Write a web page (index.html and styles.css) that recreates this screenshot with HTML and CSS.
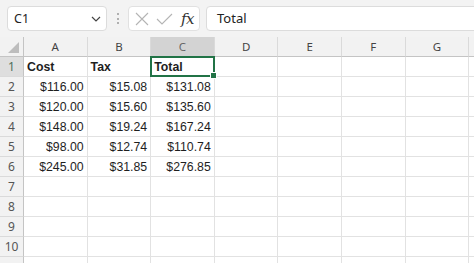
FILE: index.html
```html
<!DOCTYPE html>
<html>
<head>
<meta charset="utf-8">
<link rel="stylesheet" href="styles.css">
</head>
<body>
<div class="app">
  <div class="topbar">
    <div class="namebox">
      <span class="nb-text">C1</span>
      <svg class="chev" width="10" height="6" viewBox="0 0 10 6"><path d="M1 1 L5 5 L9 1" fill="none" stroke="#444" stroke-width="1.2"/></svg>
    </div>
    <div class="dots"><i></i><i></i><i></i></div>
    <div class="fxbox">
      <svg class="ic" width="14" height="14" viewBox="0 0 14 14"><path d="M1 1 L13 13 M13 1 L1 13" stroke="#b4b4b4" stroke-width="1.1" fill="none"/></svg>
      <svg class="ic" width="17" height="12" viewBox="0 0 17 12"><path d="M1 6 L6 11 L16 1" stroke="#b4b4b4" stroke-width="1.1" fill="none"/></svg>
      <span class="fx">fx</span>
    </div>
    <div class="formula">Total</div>
  </div>
  <div class="grid">
    <div class="h corner"><svg width="12" height="11" viewBox="0 0 12 11"><polygon points="11,0 11,11 0,11" fill="#bdbdbd"/></svg></div>
    <div class="h">A</div><div class="h">B</div><div class="h sel">C</div><div class="h">D</div><div class="h">E</div><div class="h">F</div><div class="h">G</div><div class="h"></div>

    <div class="r rsel">1</div><div class="c b">Cost</div><div class="c b">Tax</div><div class="c b active">Total<span class="selbox"><span class="handle"></span></span></div><div class="c"></div><div class="c"></div><div class="c"></div><div class="c"></div><div class="c"></div>

    <div class="r">2</div><div class="c n">$116.00</div><div class="c n">$15.08</div><div class="c n">$131.08</div><div class="c"></div><div class="c"></div><div class="c"></div><div class="c"></div><div class="c"></div>

    <div class="r">3</div><div class="c n">$120.00</div><div class="c n">$15.60</div><div class="c n">$135.60</div><div class="c"></div><div class="c"></div><div class="c"></div><div class="c"></div><div class="c"></div>

    <div class="r">4</div><div class="c n">$148.00</div><div class="c n">$19.24</div><div class="c n">$167.24</div><div class="c"></div><div class="c"></div><div class="c"></div><div class="c"></div><div class="c"></div>

    <div class="r">5</div><div class="c n">$98.00</div><div class="c n">$12.74</div><div class="c n">$110.74</div><div class="c"></div><div class="c"></div><div class="c"></div><div class="c"></div><div class="c"></div>

    <div class="r">6</div><div class="c n">$245.00</div><div class="c n">$31.85</div><div class="c n">$276.85</div><div class="c"></div><div class="c"></div><div class="c"></div><div class="c"></div><div class="c"></div>

    <div class="r">7</div><div class="c"></div><div class="c"></div><div class="c"></div><div class="c"></div><div class="c"></div><div class="c"></div><div class="c"></div><div class="c"></div>

    <div class="r">8</div><div class="c"></div><div class="c"></div><div class="c"></div><div class="c"></div><div class="c"></div><div class="c"></div><div class="c"></div><div class="c"></div>

    <div class="r">9</div><div class="c"></div><div class="c"></div><div class="c"></div><div class="c"></div><div class="c"></div><div class="c"></div><div class="c"></div><div class="c"></div>

    <div class="r">10</div><div class="c"></div><div class="c"></div><div class="c"></div><div class="c"></div><div class="c"></div><div class="c"></div><div class="c"></div><div class="c"></div>

    <div class="r"></div><div class="c"></div><div class="c"></div><div class="c"></div><div class="c"></div><div class="c"></div><div class="c"></div><div class="c"></div><div class="c"></div>
  </div>
</div>
</body>
</html>
```

FILE: styles.css
```css
html, body {
  margin: 0;
  padding: 0;
  background: #ffffff;
}
.app {
  width: 474px;
  height: 263px;
  overflow: hidden;
}
.topbar {
  height: 37px;
  box-sizing: border-box;
  background: #f3f3f3;
  display: flex;
  align-items: flex-start;
  padding: 6px 0 0 7px;
  font-family: "Noto Sans", "Open Sans", sans-serif;
}
.namebox {
  width: 100px;
  height: 25px;
  box-sizing: border-box;
  background: #fff;
  border: 1px solid #dcdcdc;
  border-radius: 4px;
  display: flex;
  align-items: center;
  justify-content: space-between;
  padding: 0 5px 0 6px;
  flex: none;
}
.nb-text {
  font-size: 12.5px;
  color: #222;
}
.chev { display: block; }
.dots {
  width: 21px;
  height: 25px;
  display: flex;
  flex-direction: column;
  align-items: center;
  justify-content: center;
  gap: 2.5px;
  flex: none;
}
.dots i {
  display: block;
  width: 2px;
  height: 2px;
  background: #9a9a9a;
  border-radius: 1px;
}
.fxbox {
  width: 72px;
  height: 25px;
  box-sizing: border-box;
  background: #fff;
  border: 1px solid #e1e1e1;
  border-radius: 4px;
  display: flex;
  align-items: center;
  padding-left: 6px;
  gap: 7px;
  flex: none;
}
.ic { display: block; flex: none; }
.fx {
  font-family: "DejaVu Serif", "Liberation Serif", serif;
  font-style: italic;
  font-size: 15px;
  color: #333;
  margin-left: 1px;
  letter-spacing: -0.5px;
}
.formula {
  margin-left: 6px;
  width: 290px;
  flex: none;
  height: 25px;
  box-sizing: border-box;
  background: #fff;
  border: 1px solid #dcdcdc;
  border-radius: 4px;
  font-size: 13px;
  color: #222;
  line-height: 23px;
  padding-left: 10px;
}
.grid {
  display: grid;
  grid-template-columns: 24px repeat(8, 63.6px);
  grid-auto-rows: 20px;
  font-family: "Liberation Sans", Arial, sans-serif;
}
.grid > div {
  box-sizing: border-box;
  overflow: visible;
}
.h {
  background: #f2f2f2;
  border-right: 1px solid #dadada;
  border-bottom: 1px solid #c4c4c4;
  font-family: "Noto Sans", "Open Sans", sans-serif;
  font-size: 11.5px;
  color: #444;
  display: flex;
  align-items: center;
  justify-content: center;
}
.h.corner {
  justify-content: flex-end;
  align-items: flex-end;
  padding: 0 3px 3px 0;
  border-right: 1px solid #c4c4c4;
}
.h.corner svg { display: block; }
.h.sel {
  background: #d3d3d3;
  color: #666;
}
.r {
  background: #f2f2f2;
  border-right: 1px solid #c4c4c4;
  border-bottom: 1px solid #dadada;
  font-family: "Noto Sans", "Open Sans", sans-serif;
  font-size: 12px;
  color: #555;
  display: flex;
  align-items: center;
  justify-content: center;
}
.r.rsel {
  background: #dedede;
  color: #4f6f5c;
}
.c {
  border-right: 1px solid #e2e2e2;
  border-bottom: 1px solid #e2e2e2;
  font-size: 12.3px;
  color: #1e1e1e;
  display: flex;
  align-items: center;
  padding: 1px 3px 0 3px;
  white-space: nowrap;
}
.c.n { justify-content: flex-end; }
.c.b { font-weight: bold; }
.c.active { position: relative; }
.selbox {
  position: absolute;
  left: -1px;
  top: -1px;
  right: -1px;
  bottom: -1px;
  border: 2px solid #217346;
  pointer-events: none;
}
.handle {
  position: absolute;
  right: -4px;
  bottom: -4px;
  width: 5px;
  height: 5px;
  background: #217346;
  border: 1px solid #fff;
}
```
